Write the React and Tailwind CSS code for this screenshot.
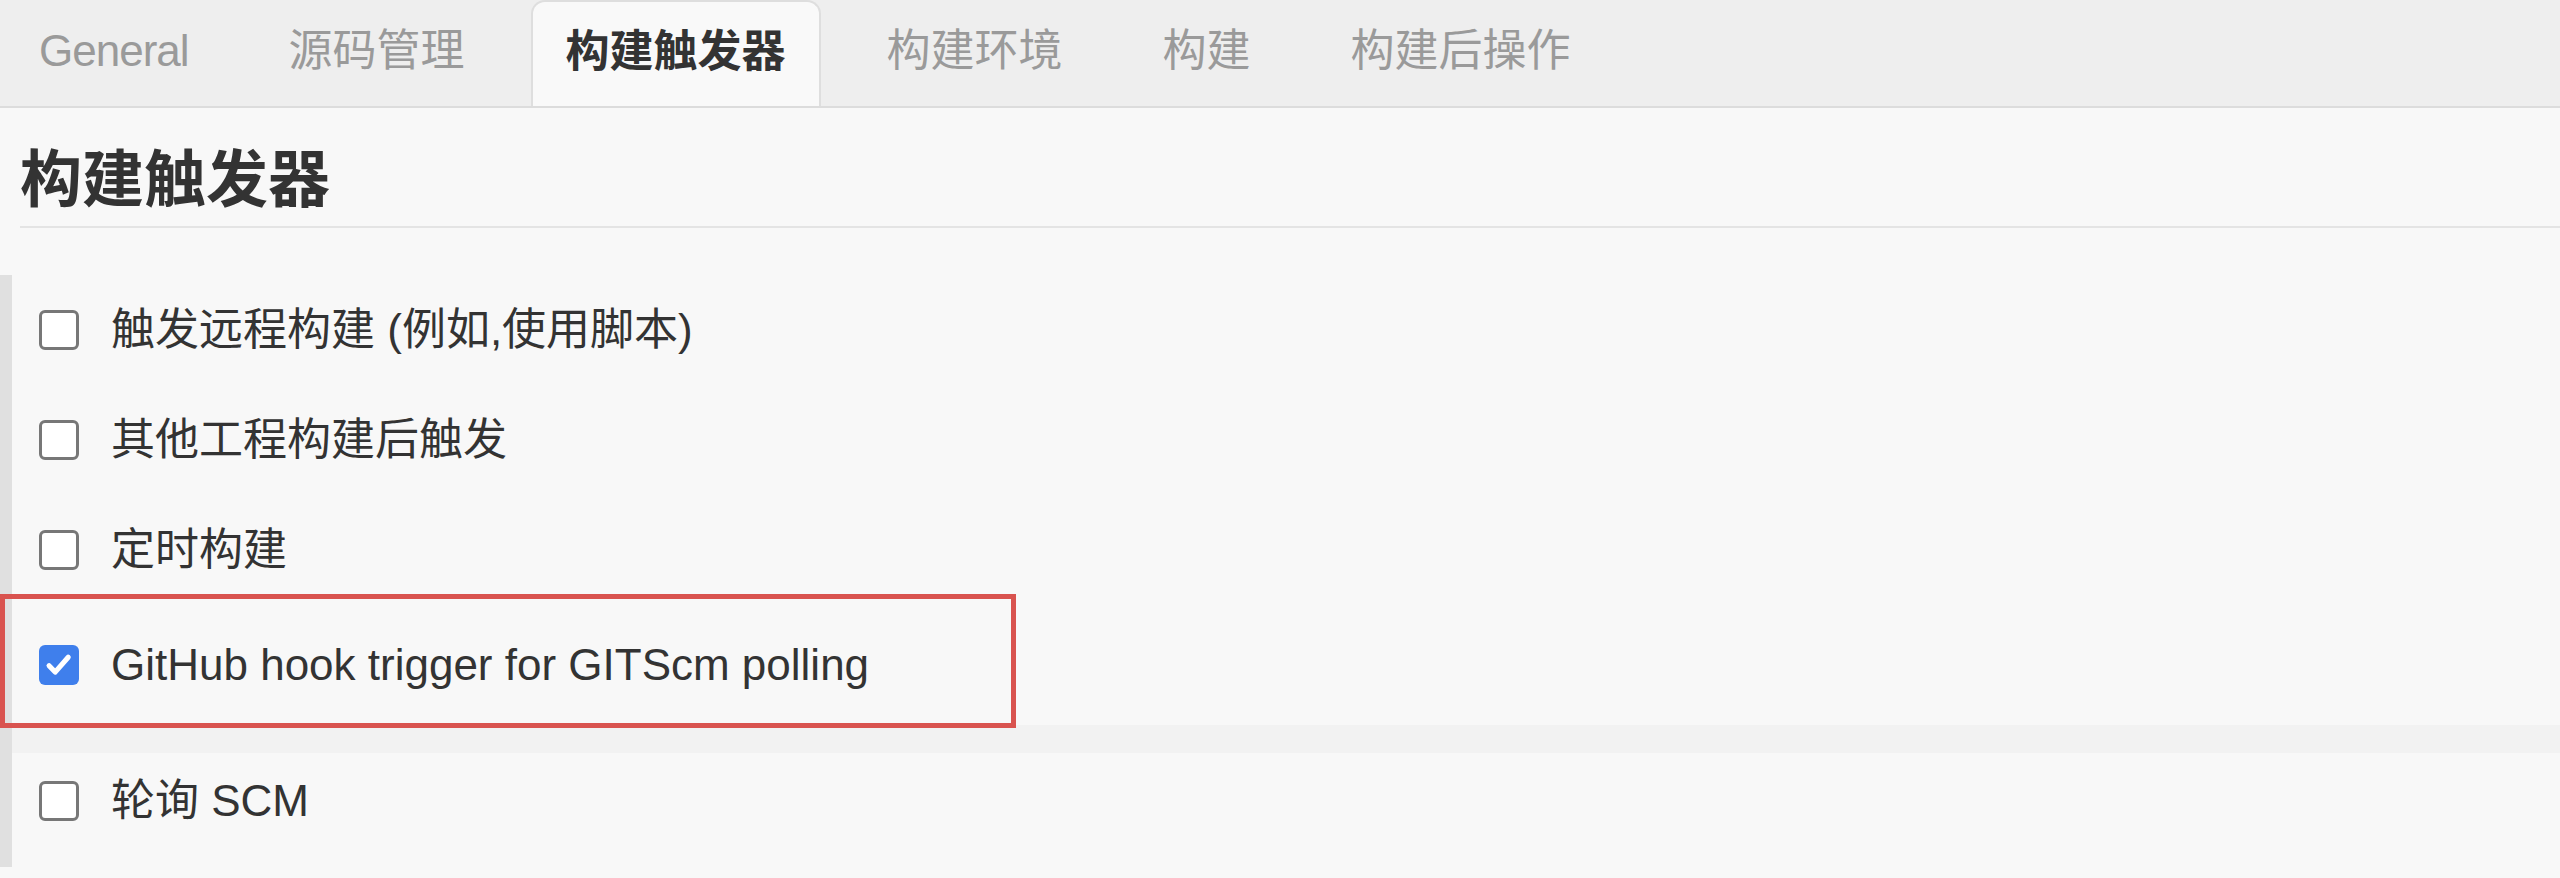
import React from 'react';

const tabs = ['General', '源码管理', '构建触发器', '构建环境', '构建', '构建后操作'];

function CheckBox({ checked }) {
  if (checked) {
    return (
      <div className="flex h-[40px] w-[40px] shrink-0 items-center justify-center rounded-[6px] bg-[#3f7fec]">
        <svg width="34" height="34" viewBox="0 0 24 24" fill="none">
          <path d="M5 12.5l4.3 4.5L18.5 6.5" stroke="white" strokeWidth="3.6" strokeLinecap="round" strokeLinejoin="round" />
        </svg>
      </div>
    );
  }
  return <div className="h-[40px] w-[40px] shrink-0 rounded-[6px] border-[3px] border-[#777777] bg-white" />;
}

function Row({ label, checked, className = '' }) {
  return (
    <div className={`flex items-center gap-[32px] pl-[27px] ${className}`}>
      <CheckBox checked={checked} />
      <span className="text-[44px] leading-none text-[#333333]">{label}</span>
    </div>
  );
}

export default function App() {
  return (
    <div className="min-h-screen bg-[#f8f8f8]" style={{ fontFamily: '"Liberation Sans", "Noto Sans CJK SC", sans-serif' }}>
      {/* Tabs */}
      <div className="flex h-[108px] gap-[32px] border-b-2 border-[#dcdcdc] bg-[#eeeeee] pl-[5px]">
        {tabs.map((t) =>
          t === '构建触发器' ? (
            <div
              key={t}
              className="flex h-full items-center rounded-t-[14px] border-2 border-b-0 border-[#dedede] bg-[#f9f9f9] px-[33px] pb-[4px] text-[44px] font-bold text-[#333333]"
            >
              {t}
            </div>
          ) : (
            <div
              key={t}
              className={`flex h-full items-center px-[34px] pb-[4px] text-[44px] text-[#9a9a9a] ${t === 'General' ? 'tracking-[-1px]' : ''}`}
            >
              {t}
            </div>
          )
        )}
      </div>

      {/* Section heading */}
      <div className="ml-[20px] border-b-2 border-[#e4e4e4] pb-[14px] pt-[42px]">
        <h1 className="text-[62px] font-bold leading-[62px] text-[#333333]">构建触发器</h1>
      </div>

      {/* Trigger options */}
      <div className="mt-[54px] border-l-[12px] border-[#e0e0e0] pb-[18px]">
        <Row className="-mt-[7px] h-[110px]" label="触发远程构建 (例如,使用脚本)" />
        <Row className="h-[110px]" label="其他工程构建后触发" />
        <Row className="h-[110px]" label="定时构建" />
        <div className="relative">
          <Row className="h-[120px]" label="GitHub hook trigger for GITScm polling" checked />
          <div className="absolute -left-[12px] -top-[11px] h-[134px] w-[1016px] border-[5px] border-[#d9534f]" />
        </div>
        <div className="h-[28px] bg-[#f2f2f2]" />
        <Row className="h-[96px]" label="轮询 SCM" />
      </div>
    </div>
  );
}
